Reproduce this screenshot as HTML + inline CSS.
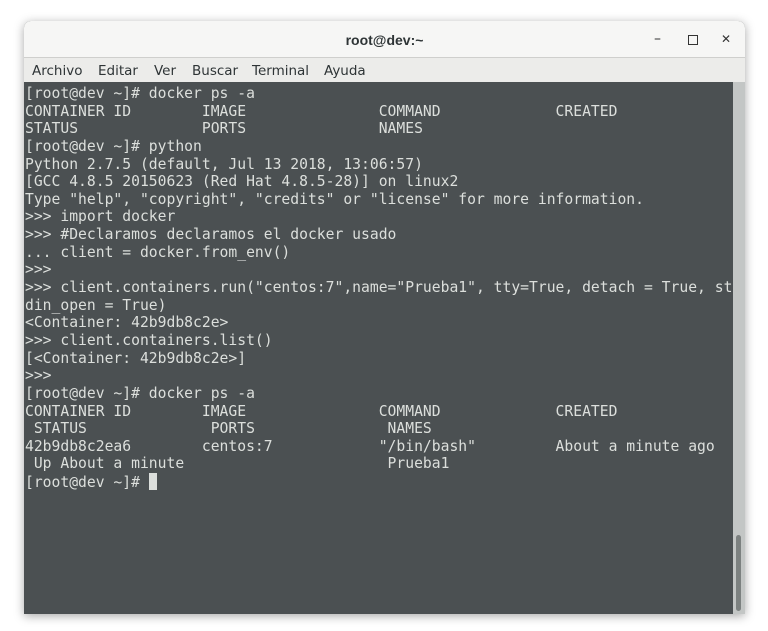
<!DOCTYPE html>
<html><head><meta charset="utf-8"><style>
html,body{margin:0;padding:0;background:#fff;width:768px;height:631px;overflow:hidden}
.win{position:absolute;left:24px;top:21px;width:721px;height:593px;border-radius:7px 7px 0 0;overflow:hidden;box-shadow:0 2px 10px rgba(0,0,0,.35);background:#4b5052}
.title{position:absolute;left:0;top:0;width:721px;height:36px;background:#f6f6f5;border-bottom:1px solid #cfcfcd;font:bold 14px "Liberation Sans",sans-serif;color:#2e3436;text-align:center;line-height:38px}
.ctl{position:absolute;top:0;font:14px "DejaVu Sans",sans-serif;color:#333}
.menu{position:absolute;left:0;top:37px;width:721px;height:24px;background:#ececea;font:13.5px "DejaVu Sans",sans-serif;color:#2e3436;line-height:26px}
.menu span{position:absolute;top:0}
.term{position:absolute;left:0;top:61px;width:709px;height:532px;background:#4b5052}
pre{margin:0;position:absolute;left:1px;top:3px;font:14.7px/17.64px "DejaVu Sans Mono",monospace;color:#dcdfdc;letter-spacing:0}
.sb{position:absolute;left:709px;top:61px;width:12px;height:532px;background:#c3c6c5}
.th{position:absolute;left:3px;top:453px;width:5px;height:76px;background:#7c8180;border-radius:3px}
.cur{display:inline-block;width:8px;height:17px;background:#dcdfdc;vertical-align:-3px}
</style></head><body>
<div class="win">
<div class="title">root@dev:~
<span class="ctl" style="left:630px;line-height:36px">–</span>
<div style="position:absolute;left:664px;top:14px;width:8px;height:8px;border:1.3px solid #333"></div>
<span class="ctl" style="left:697px;line-height:36px;font-size:12px">✕</span>
</div>
<div class="menu"><span style="left:8px">Archivo</span><span style="left:74px">Editar</span><span style="left:130px">Ver</span><span style="left:168px">Buscar</span><span style="left:228px">Terminal</span><span style="left:300px">Ayuda</span></div>
<div class="term"><pre>[root@dev ~]# docker ps -a
CONTAINER ID        IMAGE               COMMAND             CREATED
STATUS              PORTS               NAMES
[root@dev ~]# python
Python 2.7.5 (default, Jul 13 2018, 13:06:57)
[GCC 4.8.5 20150623 (Red Hat 4.8.5-28)] on linux2
Type "help", "copyright", "credits" or "license" for more information.
&gt;&gt;&gt; import docker
&gt;&gt;&gt; #Declaramos declaramos el docker usado
... client = docker.from_env()
&gt;&gt;&gt;
&gt;&gt;&gt; client.containers.run("centos:7",name="Prueba1", tty=True, detach = True, st
din_open = True)
&lt;Container: 42b9db8c2e&gt;
&gt;&gt;&gt; client.containers.list()
[&lt;Container: 42b9db8c2e&gt;]
&gt;&gt;&gt;
[root@dev ~]# docker ps -a
CONTAINER ID        IMAGE               COMMAND             CREATED
 STATUS              PORTS               NAMES
42b9db8c2ea6        centos:7            "/bin/bash"         About a minute ago
 Up About a minute                       Prueba1
[root@dev ~]# <span class="cur"></span></pre></div>
<div class="sb"><div class="th"></div></div>
</div>
</body></html>
